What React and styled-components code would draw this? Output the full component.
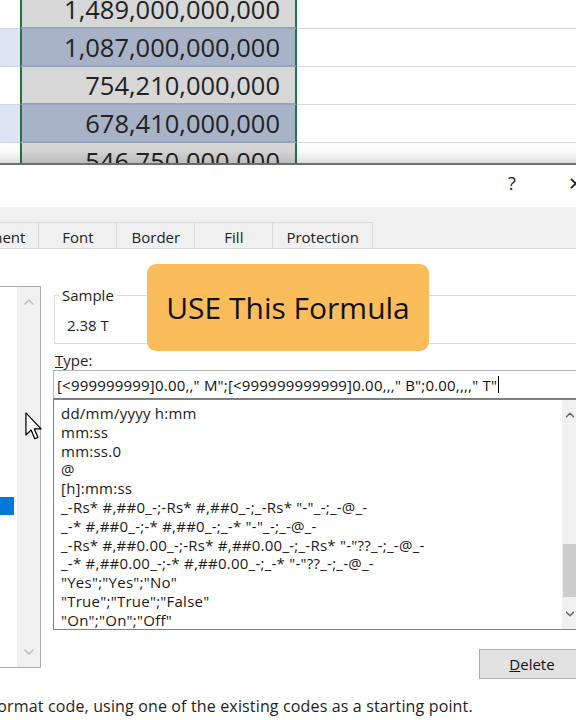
import React from 'react'
import styled, { createGlobalStyle } from 'styled-components'
import { ChevronUp, ChevronDown } from 'lucide-react'

const values = [
  '1,489,000,000,000',
  '1,087,000,000,000',
  '754,210,000,000',
  '678,410,000,000',
  '546,750,000,000',
]

const tabs = ['Number', 'Alignment', 'Font', 'Border', 'Fill', 'Protection']

const categories = [
  'General', 'Number', 'Currency', 'Accounting', 'Date', 'Time',
  'Percentage', 'Fraction', 'Scientific', 'Text', 'Special', 'Custom',
]

const formats = [
  'dd/mm/yyyy h:mm',
  'mm:ss',
  'mm:ss.0',
  '@',
  '[h]:mm:ss',
  '_-Rs* #,##0_-;-Rs* #,##0_-;_-Rs* "-"_-;_-@_-',
  '_-* #,##0_-;-* #,##0_-;_-* "-"_-;_-@_-',
  '_-Rs* #,##0.00_-;-Rs* #,##0.00_-;_-Rs* "-"??_-;_-@_-',
  '_-* #,##0.00_-;-* #,##0.00_-;_-* "-"??_-;_-@_-',
  '"Yes";"Yes";"No"',
  '"True";"True";"False"',
  '"On";"On";"Off"',
]

const typeCode = '[<999999999]0.00,," M";[<999999999999]0.00,,," B";0.00,,,," T"'

const App = () => (
  <>
    <GlobalStyle />
    <Page>
      <Sheet>
        <SheetGrid>
          {values.map((v, i) => (
            <SheetRow key={v}>
              <LeftCell $shade={i % 2 === 1} />
              <ValueCell $shade={i % 2 === 1}>{v}</ValueCell>
              <RestCell />
            </SheetRow>
          ))}
        </SheetGrid>
      </Sheet>

      <Dialog>
        <TitleBar>
          <TitleButton>?</TitleButton>
          <TitleButton>✕</TitleButton>
        </TitleBar>

        <TabStrip>
          {tabs.map((t, i) => (
            <Tab key={t} $active={i === 0} $last={i === tabs.length - 1}>{t}</Tab>
          ))}
        </TabStrip>

        <Body>
          <CategoryColumn>
            <FieldLabel><u>C</u>ategory:</FieldLabel>
            <CategoryList>
              <CategoryItems>
                {categories.map(c => (
                  <CategoryItem key={c} $selected={c === 'Custom'}>{c}</CategoryItem>
                ))}
              </CategoryItems>
              <ScrollBar $w={23}>
                <ScrollArrow $dim><ChevronUp size={16} strokeWidth={2} /></ScrollArrow>
                <ScrollTrack />
                <ScrollArrow $dim><ChevronDown size={16} strokeWidth={2} /></ScrollArrow>
              </ScrollBar>
            </CategoryList>
          </CategoryColumn>

          <FormatPanel>
            <SampleGroup>
              <SampleLegend>Sample</SampleLegend>
              <SampleValue>2.38 T</SampleValue>
            </SampleGroup>

            <FieldLabel $gap><u>T</u>ype:</FieldLabel>
            <TypeInput>
              {typeCode}
              <Caret />
            </TypeInput>

            <FormatList>
              <FormatItems>
                {formats.map(f => (
                  <FormatItem key={f}>{f}</FormatItem>
                ))}
              </FormatItems>
              <ScrollBar $w={15}>
                <ScrollArrow><ChevronUp size={14} strokeWidth={2.2} /></ScrollArrow>
                <ScrollTrack>
                  <ScrollThumb />
                </ScrollTrack>
                <ScrollArrow><ChevronDown size={14} strokeWidth={2.2} /></ScrollArrow>
              </ScrollBar>
            </FormatList>

            <DeleteButton><u>D</u>elete</DeleteButton>
          </FormatPanel>

          <Hint>Type the number format code, using one of the existing codes as a starting point.</Hint>
        </Body>
      </Dialog>

      <Callout>USE This Formula</Callout>

      <Cursor>
        <svg width="17" height="28" viewBox="0 0 12 20">
          <path
            d="M0.6 0.6 L0.6 16.4 L4.3 12.9 L6.9 19.1 L9.1 18.1 L6.6 12.1 L11.4 12.1 Z"
            fill="#fff"
            stroke="#000"
            strokeWidth="0.9"
            strokeLinejoin="round"
          />
        </svg>
      </Cursor>
    </Page>
  </>
)

const GlobalStyle = createGlobalStyle`
  html, body {
    margin: 0;
    padding: 0;
    background: #fff;
  }
  body {
    font-family: "Open Sans", "Noto Sans", sans-serif;
  }
  * {
    box-sizing: border-box;
  }
`

const Page = styled.div`
  position: relative;
  width: 576px;
  height: 720px;
  overflow: hidden;
  display: flex;
  flex-direction: column;
  background: #fff;
`

const Sheet = styled.div`
  height: 163px;
  flex-shrink: 0;
  overflow: hidden;
`

const SheetGrid = styled.div`
  margin-top: -9px;
`

const SheetRow = styled.div`
  display: flex;
  height: 38px;
`

const LeftCell = styled.div`
  width: 20px;
  background: ${p => (p.$shade ? '#dbe5f4' : '#fff')};
  border-bottom: 1px solid #cdd5e2;
`

const ValueCell = styled.div`
  width: 277px;
  display: flex;
  align-items: center;
  justify-content: flex-end;
  padding-right: 15px;
  background: ${p => (p.$shade ? '#a9b3c7' : '#d7d7d7')};
  border-left: 2px solid #217346;
  border-right: 2px solid #217346;
  border-bottom: 2px solid #95a3bd;
  font-size: 25.5px;
  color: #222;
`

const RestCell = styled.div`
  flex: 1;
  border-bottom: 1px solid #d9d9d9;
`

const Dialog = styled.div`
  position: relative;
  z-index: 1;
  flex: 1;
  width: 760px;
  margin-left: -160px;
  display: flex;
  flex-direction: column;
  background: #fff;
  border-top: 2px solid #6e6e6e;
  box-shadow: 0 -2px 16px rgba(0, 0, 0, 0.22);
  color: #1e1e1e;
`

const TitleBar = styled.div`
  height: 42px;
  display: flex;
  justify-content: flex-end;
  align-items: flex-start;
  gap: 17px;
  padding-right: 2px;
`

const TitleButton = styled.div`
  width: 46px;
  height: 36px;
  line-height: 36px;
  text-align: center;
  font-size: 18px;
  color: #222;
`

const TabStrip = styled.div`
  height: 42px;
  display: flex;
  align-items: flex-end;
  padding-left: 15px;
  background: #f0f0f0;
  border-bottom: 1px solid #d9d9d9;
`

const Tab = styled.div`
  height: 26px;
  min-width: 78px;
  padding: 3px 13px 0;
  display: flex;
  align-items: center;
  justify-content: center;
  font-size: 15px;
  color: #222;
  background: ${p => (p.$active ? '#fff' : '#f0f0f0')};
  border-top: 1px solid #d9d9d9;
  border-left: 1px solid #d9d9d9;
  border-right: ${p => (p.$last ? '1px solid #d9d9d9' : 'none')};
`

const Body = styled.div`
  display: grid;
  grid-template-columns: 181px 525px;
  column-gap: 12px;
  align-items: start;
  padding: 17px 22px 0 20px;
`

const CategoryColumn = styled.div`
  display: flex;
  flex-direction: column;
`

const FieldLabel = styled.div`
  margin-top: ${p => (p.$gap ? '6px' : '0')};
  padding-left: 2px;
  font-size: 15px;
  line-height: 20px;
  color: #1e1e1e;
`

const CategoryList = styled.div`
  height: 382px;
  display: flex;
  border: 1px solid #adadad;
`

const CategoryItems = styled.div`
  flex: 1;
  padding: 12px 3px 0 0;
  overflow: hidden;
`

const CategoryItem = styled.div`
  height: 18px;
  line-height: 18px;
  padding-left: 4px;
  font-size: 13px;
  white-space: nowrap;
  overflow: hidden;
  color: ${p => (p.$selected ? '#fff' : '#1e1e1e')};
  background: ${p => (p.$selected ? '#0078d7' : 'transparent')};
`

const ScrollBar = styled.div`
  width: ${p => p.$w}px;
  flex-shrink: 0;
  display: flex;
  flex-direction: column;
  background: #f0f0f0;
`

const ScrollArrow = styled.div`
  height: 30px;
  display: flex;
  align-items: center;
  justify-content: center;
  color: ${p => (p.$dim ? '#b9b9b9' : '#5f5f5f')};
`

const ScrollTrack = styled.div`
  flex: 1;
  display: flex;
  flex-direction: column;
  justify-content: flex-end;
  padding: 0 1px 2px;
`

const ScrollThumb = styled.div`
  height: 53px;
  background: #cdcdcd;
`

const FormatPanel = styled.div`
  display: flex;
  flex-direction: column;
  padding-top: 19px;
`

const SampleGroup = styled.fieldset`
  margin: 0 0 0 1px;
  padding: 0 12px 8px;
  min-width: 0;
  border: 1px solid #dcdcdc;
`

const SampleLegend = styled.legend`
  margin-left: -8px;
  padding: 0 3px;
  font-size: 15px;
  line-height: 20px;
`

const SampleValue = styled.div`
  margin-top: 10px;
  font-size: 15px;
  line-height: 20px;
`

const TypeInput = styled.div`
  height: 29px;
  display: flex;
  align-items: center;
  padding: 0 3px;
  border: 1px solid #b4b4b4;
  border-bottom-color: #7a7a7a;
  font-size: 15px;
  letter-spacing: 0.2px;
  color: #111;
  white-space: pre;
  overflow: hidden;
`

const Caret = styled.span`
  display: inline-block;
  width: 1px;
  height: 17px;
  margin-left: 1px;
  background: #000;
`

const FormatList = styled.div`
  height: 231px;
  display: flex;
  border: 1px solid #828282;
`

const FormatItems = styled.div`
  flex: 1;
  padding: 4px 0 0 7px;
  overflow: hidden;
`

const FormatItem = styled.div`
  font-size: 15px;
  line-height: 18.8px;
  letter-spacing: 0.25px;
  white-space: pre;
  color: #1a1a1a;
`

const DeleteButton = styled.button`
  align-self: flex-end;
  width: 106px;
  height: 30px;
  margin: 19px -7px 0 0;
  padding: 0;
  font-family: inherit;
  font-size: 15px;
  color: #111;
  background: #e1e1e1;
  border: 1px solid #adadad;
`

const Hint = styled.div`
  grid-column: 1 / -1;
  margin: 17px 0 0 -3px;
  font-size: 16px;
  line-height: 20px;
  letter-spacing: 0.15px;
  white-space: nowrap;
  color: #1e1e1e;
`

const Callout = styled.div`
  position: absolute;
  left: 147px;
  top: 264px;
  z-index: 2;
  width: 282px;
  height: 87px;
  display: flex;
  align-items: center;
  justify-content: center;
  border-radius: 9px;
  background: #fbbd5c;
  font-size: 30px;
  color: #111;
`

const Cursor = styled.div`
  position: absolute;
  left: 25px;
  top: 412px;
  z-index: 3;
  line-height: 0;
`

export default App
